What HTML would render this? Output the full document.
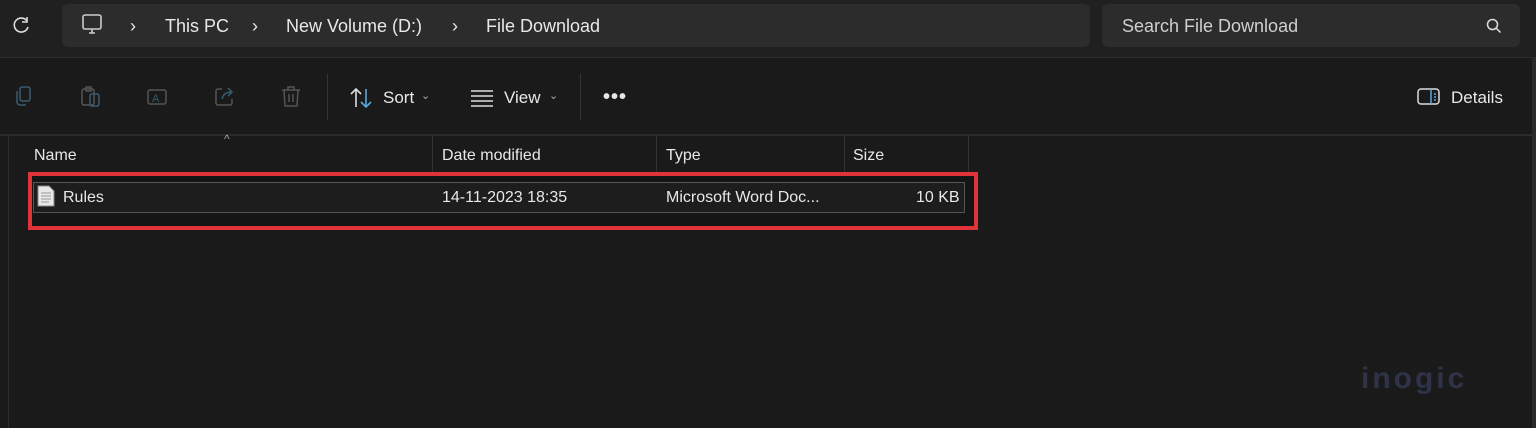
<!DOCTYPE html>
<html><head><style>
body{margin:0;width:1536px;height:428px;background:#1a1a1a;font-family:"Liberation Sans",sans-serif;color:#e8e8e8;overflow:hidden;position:relative}
.a{position:absolute}
.t{font-size:18px;white-space:nowrap}
</style></head><body>
<div class="a" style="left:0;top:0;width:1536px;height:57px;background:#202020"></div>
<div class="a" style="left:0;top:57px;width:1536px;height:1px;background:#2e2e2e"></div>
<svg class="a" style="left:10px;top:15px" width="22" height="22" viewBox="0 0 22 22"><path d="M17 6A7 7 0 1 0 18 12" fill="none" stroke="#ddd" stroke-width="1.6"/><path d="M17 2v5h-5" fill="none" stroke="#ddd" stroke-width="1.6"/></svg>
<div class="a" style="left:62px;top:4px;width:1028px;height:43px;background:#2c2c2c;border-radius:6px"></div>
<svg class="a" style="left:80px;top:13px" width="24" height="24" viewBox="0 0 24 24"><rect x="3" y="2" width="18" height="14" rx="2" fill="none" stroke="#ccc" stroke-width="1.6"/><path d="M9 20h6M12 16v4" stroke="#ccc" stroke-width="1.6"/></svg>
<div class="a t" style="left:130px;top:16px">›</div>
<div class="a t" style="left:165px;top:16px">This PC</div>
<div class="a t" style="left:252px;top:16px">›</div>
<div class="a t" style="left:286px;top:16px">New Volume (D:)</div>
<div class="a t" style="left:452px;top:16px">›</div>
<div class="a t" style="left:486px;top:16px">File Download</div>
<div class="a" style="left:1102px;top:4px;width:418px;height:43px;background:#2c2c2c;border-radius:6px"></div>
<div class="a t" style="left:1122px;top:16px;color:#cfcfcf">Search File Download</div>
<svg class="a" style="left:1486px;top:18px" width="16" height="16" viewBox="0 0 16 16"><circle cx="6.5" cy="6.5" r="5" fill="none" stroke="#ddd" stroke-width="1.5"/><path d="M10 10l4.5 4.5" stroke="#ddd" stroke-width="1.5"/></svg>
<svg class="a" style="left:12px;top:84px" width="26" height="26" viewBox="0 0 26 26" fill="none" stroke="#3a5a70" stroke-width="1.5"><rect x="8" y="3" width="10" height="14" rx="2"/><path d="M5 7v11a3 3 0 0 0 3 3h6"/></svg>
<svg class="a" style="left:78px;top:84px" width="26" height="26" viewBox="0 0 26 26" fill="none" stroke="#555" stroke-width="1.5"><rect x="4" y="5" width="12" height="16" rx="2"/><rect x="8" y="3" width="5" height="4"/><rect x="12" y="10" width="9" height="12" rx="2" stroke="#3a5a70"/></svg>
<svg class="a" style="left:145px;top:84px" width="26" height="26" viewBox="0 0 26 26" fill="none" stroke="#555" stroke-width="1.5"><rect x="3" y="6" width="18" height="14" rx="2"/><text x="7" y="18" font-size="11" fill="#3a5a70" stroke="none" font-family="Liberation Sans">A</text></svg>
<svg class="a" style="left:212px;top:84px" width="26" height="26" viewBox="0 0 26 26" fill="none" stroke="#555" stroke-width="1.5"><path d="M10 5H6a2 2 0 0 0-2 2v12a2 2 0 0 0 2 2h12a2 2 0 0 0 2-2v-4"/><path d="M10 15c1-5 5-7 10-7M16 4l4 4-4 4" stroke="#3a5a70"/></svg>
<svg class="a" style="left:278px;top:84px" width="26" height="26" viewBox="0 0 26 26" fill="none" stroke="#555" stroke-width="1.5"><path d="M4 6h18M10 6V3h6v3M6 6l1 16h12l1-16M11 10v8M15 10v8"/></svg>
<div class="a" style="left:327px;top:74px;width:1px;height:46px;background:#333"></div>
<svg class="a" style="left:348px;top:85px" width="26" height="26" viewBox="0 0 26 26" fill="none" stroke-width="1.6"><path d="M8 22V4M3 9l5-5 5 5" stroke="#ddd"/><path d="M18 4v18M13 17l5 5 5-5" stroke="#5aa7de"/></svg>
<div class="a t" style="left:383px;top:88px;font-size:17px">Sort</div>
<div class="a" style="left:421px;top:89px;font-size:11px;color:#aaa">⌄</div>
<svg class="a" style="left:470px;top:88px" width="24" height="20" viewBox="0 0 24 20" stroke="#ddd" stroke-width="1.6"><path d="M1 3h22M1 8h22M1 13h22M1 18h22"/></svg>
<div class="a t" style="left:504px;top:88px;font-size:17px">View</div>
<div class="a" style="left:549px;top:89px;font-size:11px;color:#aaa">⌄</div>
<div class="a" style="left:580px;top:74px;width:1px;height:46px;background:#333"></div>
<div class="a" style="left:603px;top:86px;font-size:20px;letter-spacing:1px;font-weight:bold">•••</div>
<svg class="a" style="left:1417px;top:87px" width="24" height="20" viewBox="0 0 24 20" fill="none" stroke-width="1.5"><rect x="1" y="2" width="21" height="15" rx="3" stroke="#ddd"/><path d="M14 2v15M17 7h2M17 10h2M17 13h2" stroke="#5aa7de"/></svg>
<div class="a t" style="left:1451px;top:88px;font-size:17px">Details</div>
<div class="a" style="left:0;top:134px;width:1536px;height:2px;background:#2b2b2b"></div>
<div class="a" style="left:1532px;top:58px;width:4px;height:370px;background:#2a2a2a"></div>
<div class="a" style="left:8px;top:136px;width:1px;height:292px;background:#2c2c2c"></div>
<div class="a" style="left:224px;top:132px;font-size:12px;color:#aaa">^</div>
<div class="a t" style="left:34px;top:147px;font-size:16px">Name</div>
<div class="a" style="left:432px;top:136px;width:1px;height:36px;background:#333"></div>
<div class="a t" style="left:442px;top:147px;font-size:16px">Date modified</div>
<div class="a" style="left:656px;top:136px;width:1px;height:36px;background:#333"></div>
<div class="a t" style="left:666px;top:147px;font-size:16px">Type</div>
<div class="a" style="left:844px;top:136px;width:1px;height:36px;background:#333"></div>
<div class="a t" style="left:853px;top:147px;font-size:16px">Size</div>
<div class="a" style="left:968px;top:136px;width:1px;height:36px;background:#333"></div>
<div class="a" style="left:28px;top:172px;width:950px;height:58px;border:4px solid #e0343a;box-sizing:border-box;background:#151515"></div>
<div class="a" style="left:33px;top:182px;width:930px;height:29px;border:1px solid #555;background:#1d1d1d"></div>
<svg class="a" style="left:36px;top:185px" width="20" height="22" viewBox="0 0 20 22"><path d="M2 1h11l5 5v15H2z" fill="#e8e8e8" stroke="#888"/><path d="M5 8h10M5 11h10M5 14h10M5 17h8" stroke="#999"/></svg>
<div class="a t" style="left:63px;top:189px;font-size:16px">Rules</div>
<div class="a t" style="left:442px;top:189px;font-size:16px">14-11-2023 18:35</div>
<div class="a t" style="left:666px;top:189px;font-size:16px">Microsoft Word Doc...</div>
<div class="a t" style="left:916px;top:189px;font-size:16px">10 KB</div>
<div class="a" style="left:1361px;top:362px;font-size:30px;font-weight:bold;letter-spacing:3px;color:#2f3348">inogic</div>
</body></html>
